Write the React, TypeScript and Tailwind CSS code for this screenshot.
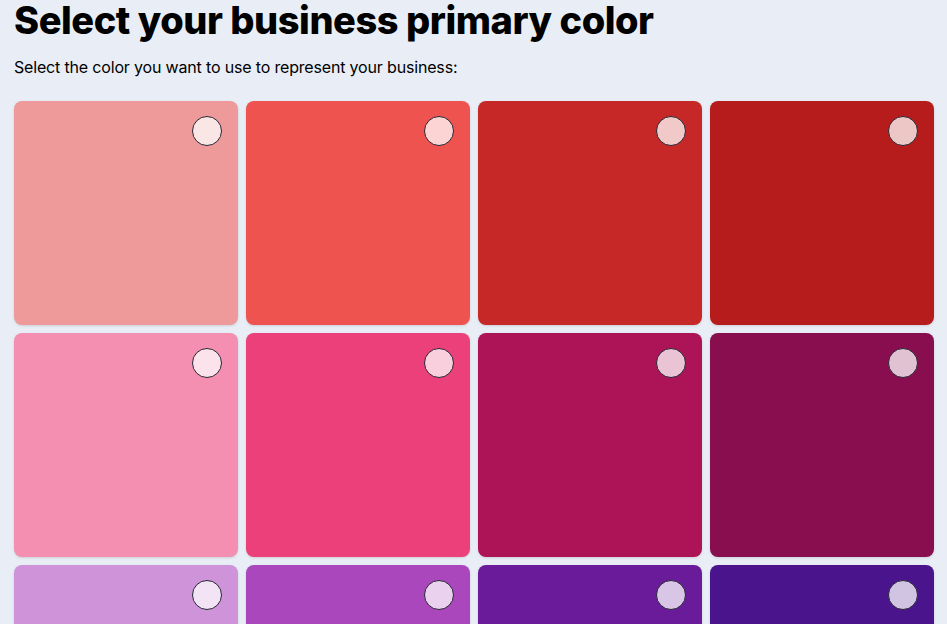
import React from "react";

const colors = [
  "bg-[#EF9A9A]",
  "bg-[#EF5350]",
  "bg-[#C62828]",
  "bg-[#B71C1C]",
  "bg-[#F48FB1]",
  "bg-[#EC407A]",
  "bg-[#AD1457]",
  "bg-[#880E4F]",
  "bg-[#CE93D8]",
  "bg-[#AB47BC]",
  "bg-[#6A1B9A]",
  "bg-[#4A148C]",
];

export default function App() {
  return (
    <div
      className="bg-[#E9EEF6] px-[14px] overflow-hidden h-[624px]"
      style={{ fontFamily: "Inter, 'Noto Sans', sans-serif" }}
    >
      <h1 className="text-[38px] leading-[40px] font-extrabold text-black tracking-[-0.45px]">
        Select your business primary color
      </h1>
      <p className="text-[16px] leading-[24px] text-black mt-[15px] tracking-[-0.17px]">
        Select the color you want to use to represent your business:
      </p>
      <div className="grid grid-cols-4 gap-2 mt-[22px] w-[920px]">
        {colors.map((c, i) => (
          <div
            key={i}
            className={`relative h-[224px] rounded-lg shadow-sm ${c}`}
          >
            <div className="absolute top-[15px] right-[16px] w-[30px] h-[30px] rounded-full border-[1.5px] border-[#262633] bg-white/75" />
          </div>
        ))}
      </div>
    </div>
  );
}
